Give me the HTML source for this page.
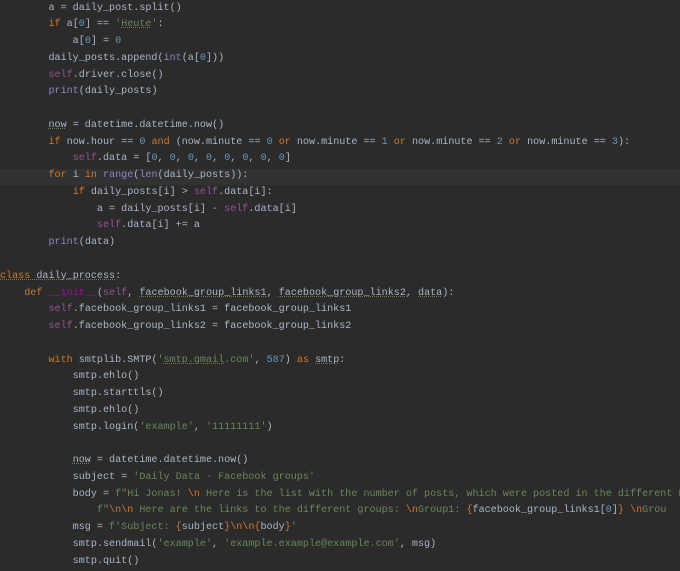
<!DOCTYPE html>
<html><head><meta charset="utf-8"><style>
html,body{margin:0;padding:0;background:#2b2b2b;width:680px;height:569px;overflow:hidden}
pre{margin:0;position:absolute;left:0;top:0.5px;font-family:"Liberation Mono",monospace;font-size:10.1px;line-height:16.76px;color:#a9b7c6;white-space:pre}
.hl{position:absolute;left:0;top:168.5px;width:680px;height:16.76px;background:#323232}
.k{color:#cc7832}.s{color:#6a8759}.n{color:#6897bb}.f{color:#94558d}.b{color:#8888c6}.m{color:#b200b2}
.u{text-decoration:underline dotted #7a7a4a;text-decoration-thickness:1px}
</style></head><body>
<div class="hl"></div>
<pre>        a = daily_post.split()
        <span class="k">if</span> a[<span class="n">0</span>] == <span class="s">'<span class="u">Heute</span>'</span>:
            a[<span class="n">0</span>] = <span class="n">0</span>
        daily_posts.append(<span class="b">int</span>(a[<span class="n">0</span>]))
        <span class="f">self</span>.driver.close()
        <span class="b">print</span>(daily_posts)

        <span class="u">now</span> = datetime.datetime.now()
        <span class="k">if</span> now.hour == <span class="n">0</span> <span class="k">and</span> (now.minute == <span class="n">0</span> <span class="k">or</span> now.minute == <span class="n">1</span> <span class="k">or</span> now.minute == <span class="n">2</span> <span class="k">or</span> now.minute == <span class="n">3</span>):
            <span class="f">self</span>.data = [<span class="n">0</span>, <span class="n">0</span>, <span class="n">0</span>, <span class="n">0</span>, <span class="n">0</span>, <span class="n">0</span>, <span class="n">0</span>, <span class="n">0</span>]
        <span class="k">for</span> i <span class="k">in</span> <span class="b">range</span>(<span class="b">len</span>(daily_posts)):
            <span class="k">if</span> daily_posts[i] > <span class="f">self</span>.data[i]:
                a = daily_posts[i] - <span class="f">self</span>.data[i]
                <span class="f">self</span>.data[i] += a
        <span class="b">print</span>(data)

<span class="k u">class</span><span class="u"> daily_process</span>:
    <span class="k">def</span> <span class="m">__init__</span>(<span class="f">self</span>, <span class="u">facebook_group_links1</span>, <span class="u">facebook_group_links2</span>, <span class="u">data</span>):
        <span class="f">self</span>.facebook_group_links1 = facebook_group_links1
        <span class="f">self</span>.facebook_group_links2 = facebook_group_links2

        <span class="k">with</span> smtplib.SMTP(<span class="s">'<span class="u">smtp.gmail</span>.com'</span>, <span class="n">587</span>) <span class="k">as</span> <span class="u">smtp</span>:
            smtp.ehlo()
            smtp.starttls()
            smtp.ehlo()
            smtp.login(<span class="s">'example'</span>, <span class="s">'11111111'</span>)

            <span class="u">now</span> = datetime.datetime.now()
            subject = <span class="s">'Daily Data - Facebook groups'</span>
            body = <span class="s">f"Hi Jonas! <span class="k">\n</span> Here is the list with the number of posts, which were posted in the different F</span>
                <span class="s">f"<span class="k">\n\n</span> Here are the links to the different groups: <span class="k">\n</span>Group1: </span><span class="k">{</span>facebook_group_links1[<span class="n">0</span>]<span class="k">}</span> <span class="k">\n</span><span class="s">Grou</span>
            msg = <span class="s">f'Subject: </span><span class="k">{</span>subject<span class="k">}\n\n{</span>body<span class="k">}</span><span class="s">'</span>
            smtp.sendmail(<span class="s">'example'</span>, <span class="s">'example.example@example.com'</span>, msg)
            smtp.quit()</pre>
</body></html>
